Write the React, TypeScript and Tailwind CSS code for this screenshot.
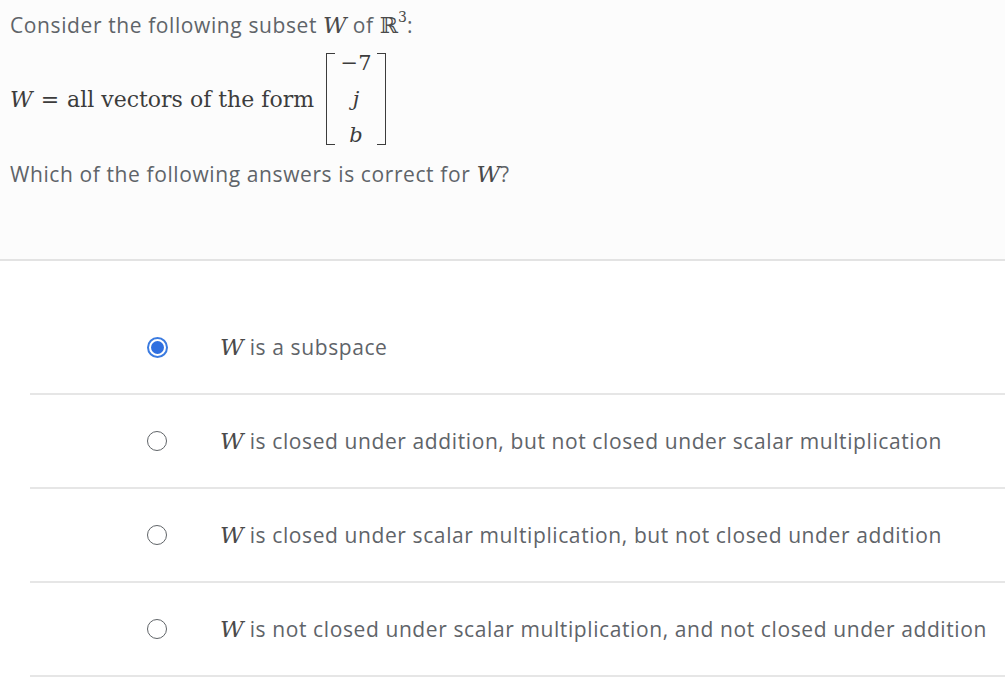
import React from "react";

const options = [
  "is a subspace",
  "is closed under addition, but not closed under scalar multiplication",
  "is closed under scalar multiplication, but not closed under addition",
  "is not closed under scalar multiplication, and not closed under addition",
];

const MathW = () => (
  <span className="italic text-[23px] tracking-normal text-[#4a4a4a]" style={{ fontFamily: '"DejaVu Serif", serif' }}>
    W
  </span>
);

const Radio: React.FC<{ checked: boolean }> = ({ checked }) =>
  checked ? (
    <span className="flex h-[21px] w-[21px] items-center justify-center rounded-full border-2 border-[#3b7be0] bg-white">
      <span className="h-[13px] w-[13px] rounded-full bg-[#2f6fe0]" />
    </span>
  ) : (
    <span className="h-[20px] w-[20px] rounded-full border-[1.5px] border-[#606468] bg-white" />
  );

export default function App() {
  return (
    <div
      className="h-[695px] w-[1005px] overflow-hidden bg-white text-[#5f6469]"
      style={{ fontFamily: '"Open Sans", Lato, sans-serif' }}
    >
      <div className="h-[261px] border-b-2 border-[#e3e3e3] bg-[#fcfcfc] px-[10px] pt-[10px]">
        <p className="text-[21px] leading-[30px] tracking-[0.6px]">
          Consider the following subset <MathW /> of{" "}
          <span className="text-[22px] tracking-normal text-[#4a4a4a]" style={{ fontFamily: '"DejaVu Serif", serif' }}>
            ℝ<sup className="relative -top-[11px] text-[14px]">3</sup>
          </span>
          :
        </p>
        <div
          className="mt-[12px] flex items-center text-[22px] text-[#3c3c3c]"
          style={{ fontFamily: '"DejaVu Serif", serif' }}
        >
          <span className="italic">W</span>
          <span className="mx-[8px]">=</span>
          <span>all vectors of the form</span>
          <div className="ml-[12px] flex">
            <div className="h-[92px] w-[9px] border-y-[1.5px] border-l-[1.5px] border-[#3c3c3c]" />
            <div className="flex w-[42px] flex-col items-center justify-between text-[21px] leading-[20px]">
              <span>−7</span>
              <span className="italic">j</span>
              <span className="italic">b</span>
            </div>
            <div className="h-[92px] w-[9px] border-y-[1.5px] border-r-[1.5px] border-[#3c3c3c]" />
          </div>
        </div>
        <p className="mt-[14px] text-[21px] leading-[30px] tracking-[0.6px]">
          Which of the following answers is correct for <MathW />?
        </p>
      </div>
      <div className="pl-[30px]">
        {options.map((o, i) => (
          <div
            key={i}
            className={`flex items-center border-b-2 border-[#e6e6e6] ${i === 0 ? "h-[134px] pt-[40px]" : "h-[94px]"}`}
          >
            <div className="flex w-[190px] justify-center pl-[64px]">
              <Radio checked={i === 0} />
            </div>
            <span className="text-[21px] tracking-[0.6px]">
              <MathW /> {o}
            </span>
          </div>
        ))}
      </div>
    </div>
  );
}
